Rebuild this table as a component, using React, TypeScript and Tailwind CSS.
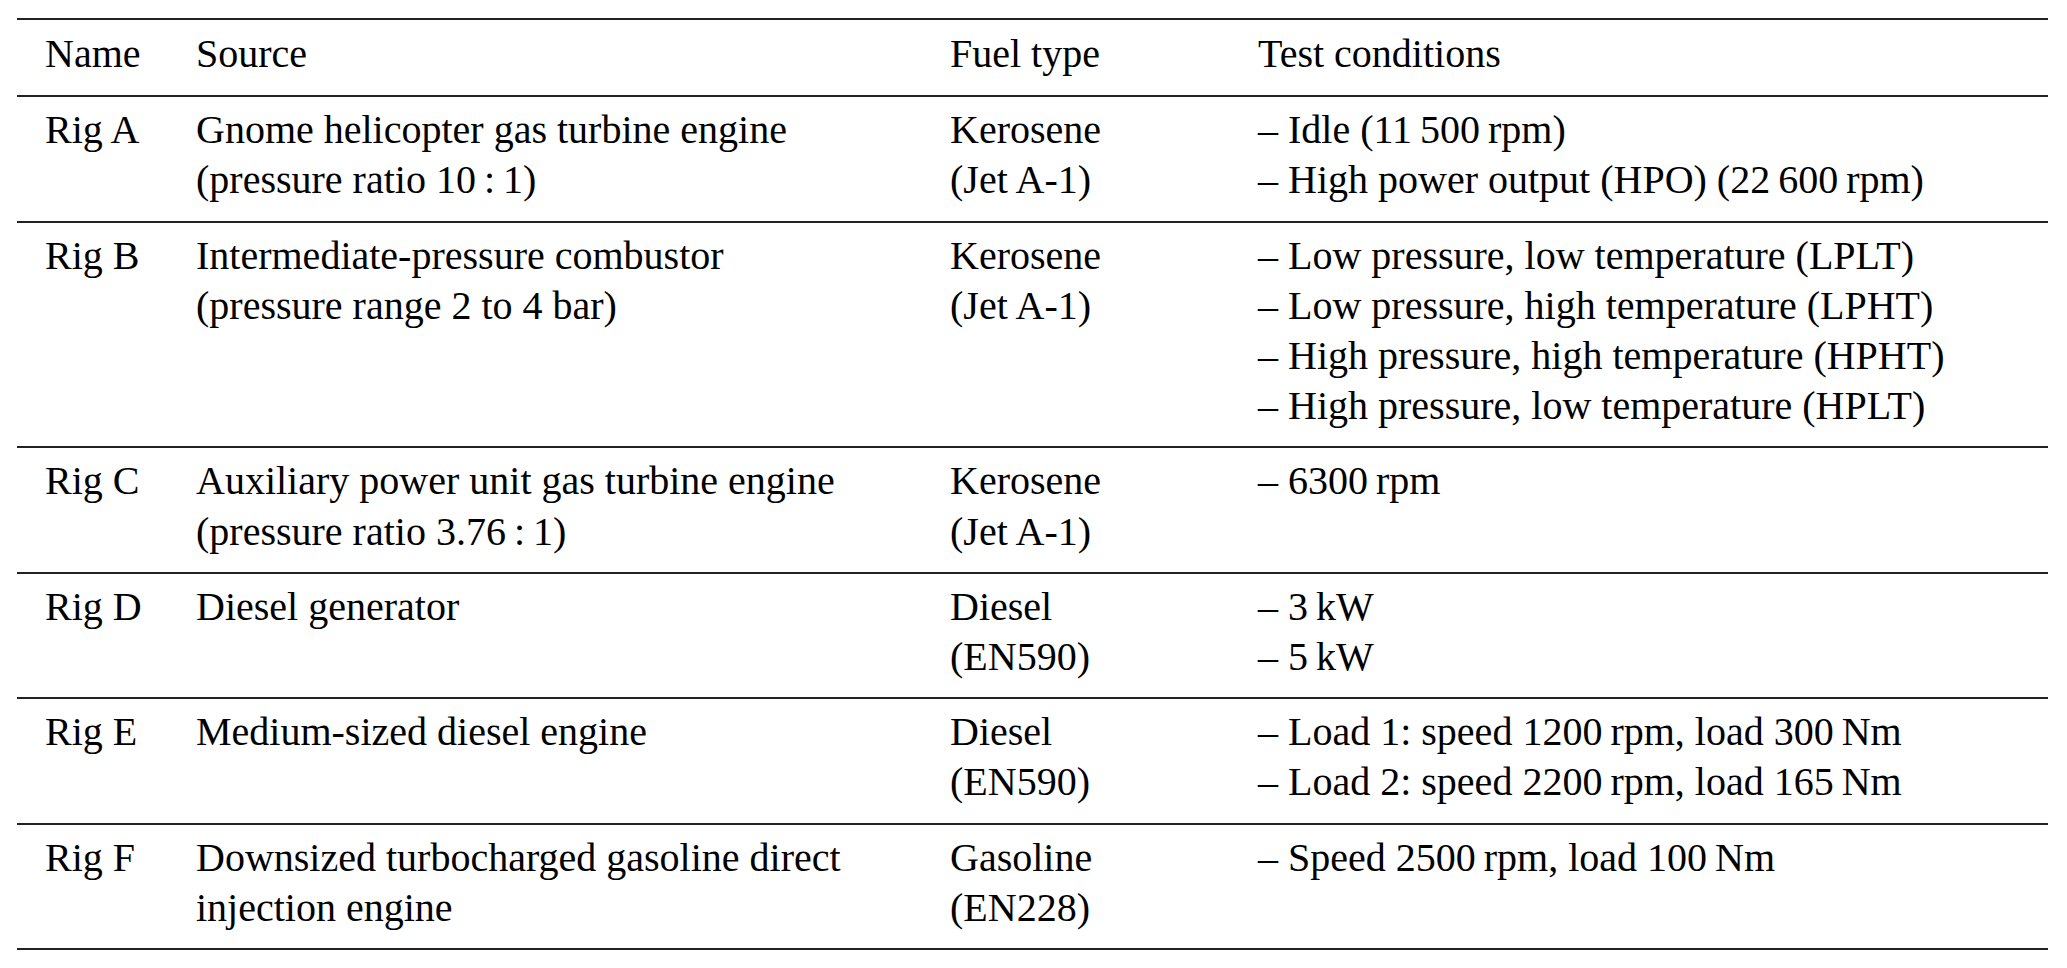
const rows = [
  {
    name: 'Rig A',
    source: ['Gnome helicopter gas turbine engine', '(pressure ratio 10\u2009:\u20091)'],
    fuel: ['Kerosene', '(Jet A-1)'],
    tests: ['– Idle (11\u2009500\u2009rpm)', '– High power output (HPO) (22\u2009600\u2009rpm)'],
  },
  {
    name: 'Rig B',
    source: ['Intermediate-pressure combustor', '(pressure range 2 to 4 bar)'],
    fuel: ['Kerosene', '(Jet A-1)'],
    tests: [
      '– Low pressure, low temperature (LPLT)',
      '– Low pressure, high temperature (LPHT)',
      '– High pressure, high temperature (HPHT)',
      '– High pressure, low temperature (HPLT)',
    ],
  },
  {
    name: 'Rig C',
    source: ['Auxiliary power unit gas turbine engine', '(pressure ratio 3.76\u2009:\u20091)'],
    fuel: ['Kerosene', '(Jet A-1)'],
    tests: ['– 6300\u2009rpm'],
  },
  {
    name: 'Rig D',
    source: ['Diesel generator'],
    fuel: ['Diesel', '(EN590)'],
    tests: ['– 3\u2009kW', '– 5\u2009kW'],
  },
  {
    name: 'Rig E',
    source: ['Medium-sized diesel engine'],
    fuel: ['Diesel', '(EN590)'],
    tests: ['– Load 1: speed 1200\u2009rpm, load 300\u2009Nm', '– Load 2: speed 2200\u2009rpm, load 165\u2009Nm'],
  },
  {
    name: 'Rig F',
    source: ['Downsized turbocharged gasoline direct', 'injection engine'],
    fuel: ['Gasoline', '(EN228)'],
    tests: ['– Speed 2500\u2009rpm, load 100\u2009Nm'],
  },
]

const grid = 'grid grid-cols-[151px_754px_308px_1fr] pl-[28px] border-b-2 border-[#222]'

function Lines({ items }: { items: string[] }) {
  return (
    <div>
      {items.map((t) => (
        <div key={t} className="whitespace-nowrap">{t}</div>
      ))}
    </div>
  )
}

export default function App() {
  return (
    <div className="w-[2067px] h-[968px] bg-white pt-[18px] text-black text-[40px] leading-[50.2px] font-serif">
      <div className="ml-[17px] w-[2031px] border-t-2 border-[#222] font-[Liberation_Serif,serif]">
        {/* Header */}
        <div className={`${grid} pt-[9px] pb-[16px]`}>
          <div>Name</div>
          <div>Source</div>
          <div>Fuel type</div>
          <div>Test conditions</div>
        </div>

        {rows.map((r) => (
          <div key={r.name} className={`${grid} pt-[8px] pb-[15px]`}>
            <div>{r.name}</div>
            <Lines items={r.source} />
            <Lines items={r.fuel} />
            <Lines items={r.tests} />
          </div>
        ))}
      </div>
    </div>
  )
}
